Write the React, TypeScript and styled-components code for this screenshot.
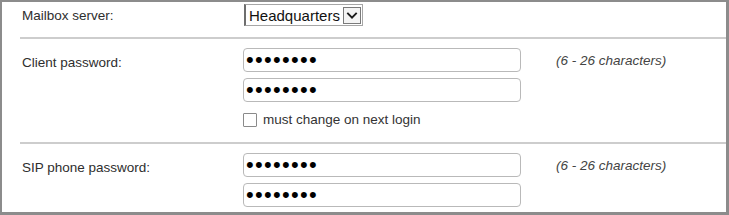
import styled, { createGlobalStyle } from "styled-components";

// styles

const GlobalStyle = createGlobalStyle`
  html, body {
    margin: 0;
    padding: 0;
    background: #ffffff;
  }
`;

const Panel = styled.div`
  width: 729px;
  height: 215px;
  box-sizing: border-box;
  border: 2px solid #8c8c8c;
  border-right-width: 3px;
  border-bottom-width: 3px;
  background: #ffffff;
  font-family: "Liberation Sans", Arial, sans-serif;
  color: #333333;
`;

const Row = styled.div<{ $top: number; $bottom: number }>`
  display: grid;
  grid-template-columns: 221px 313px 1fr;
  align-items: start;
  padding: ${(p) => p.$top}px 0 ${(p) => p.$bottom}px 20px;
`;

const Divider = styled.div`
  height: 2px;
  margin-left: 18px;
  background: #cdcdcd;
`;

const Label = styled.div<{ $lineHeight: number }>`
  font-size: 13.5px;
  line-height: ${(p) => p.$lineHeight}px;
  padding-top: 3px;
  color: #2e2e2e;
`;

const Fields = styled.div`
  display: flex;
  flex-direction: column;
  align-items: flex-start;
  gap: 6px;
`;

const Hint = styled.div`
  font-size: 13.5px;
  line-height: 24px;
  padding-top: 1px;
  font-style: italic;
  color: #444444;
`;

const SelectWrap = styled.div`
  position: relative;
  display: inline-flex;
  margin-left: 1px;
`;

const Select = styled.select`
  appearance: none;
  -webkit-appearance: none;
  width: 119px;
  height: 22px;
  box-sizing: border-box;
  margin: 0;
  padding: 0 0 0 3px;
  border: 1px solid #a6a6a6;
  border-left: 2px solid #6e6e6e;
  border-radius: 0;
  background: #ffffff;
  font-family: "Liberation Sans", Arial, sans-serif;
  font-size: 15px;
  color: #111111;
  outline: none;
`;

const ArrowBox = styled.span`
  position: absolute;
  top: 3px;
  right: 2px;
  width: 18px;
  height: 17px;
  box-sizing: border-box;
  border: 1px solid #7a7a7a;
  background: #f4f4f4;
  display: flex;
  align-items: center;
  justify-content: center;
  pointer-events: none;
`;

const PasswordInput = styled.input`
  width: 278px;
  height: 24px;
  box-sizing: border-box;
  margin: 0;
  padding: 0 2px;
  border: 1px solid #b9b9b9;
  border-radius: 4px;
  background: #ffffff;
  font-family: "Liberation Sans", Arial, sans-serif;
  font-size: 22px;
  letter-spacing: 1.3px;
  color: #000000;
  outline: none;
`;

const CheckRow = styled.label`
  display: flex;
  align-items: center;
  gap: 6px;
  margin-top: 5px;
  font-size: 13.5px;
  line-height: 14px;
  color: #333333;
`;

const CheckBox = styled.input`
  appearance: none;
  -webkit-appearance: none;
  width: 14px;
  height: 14px;
  margin: 0;
  box-sizing: border-box;
  border: 1px solid #8a8a8a;
  border-radius: 1px;
  background: #ffffff;
`;

const Chevron = () => (
  <svg width="12" height="9" viewBox="0 0 12 9">
    <path d="M1.3 1.8 L6 6.6 L10.7 1.8" fill="none" stroke="#1a1a1a" strokeWidth="1.9" />
  </svg>
);

const App = () => {
  return (
    <>
      <GlobalStyle />
      <Panel>
        <Row $top={2} $bottom={11}>
          <Label $lineHeight={18}>Mailbox server:</Label>
          <div>
            <SelectWrap>
              <Select defaultValue="hq">
                <option value="hq">Headquarters</option>
                <option value="branch">Branch office</option>
              </Select>
              <ArrowBox>
                <Chevron />
              </ArrowBox>
            </SelectWrap>
          </div>
          <div />
        </Row>
        <Divider />
        <Row $top={9} $bottom={15}>
          <Label $lineHeight={24}>Client password:</Label>
          <Fields>
            <PasswordInput type="password" defaultValue="secret12" />
            <PasswordInput type="password" defaultValue="secret12" />
            <CheckRow>
              <CheckBox type="checkbox" />
              must change on next login
            </CheckRow>
          </Fields>
          <Hint>(6 - 26 characters)</Hint>
        </Row>
        <Divider />
        <Row $top={9} $bottom={5}>
          <Label $lineHeight={24}>SIP phone password:</Label>
          <Fields>
            <PasswordInput type="password" defaultValue="secret12" />
            <PasswordInput type="password" defaultValue="secret12" />
          </Fields>
          <Hint>(6 - 26 characters)</Hint>
        </Row>
      </Panel>
    </>
  );
};

export default App;
